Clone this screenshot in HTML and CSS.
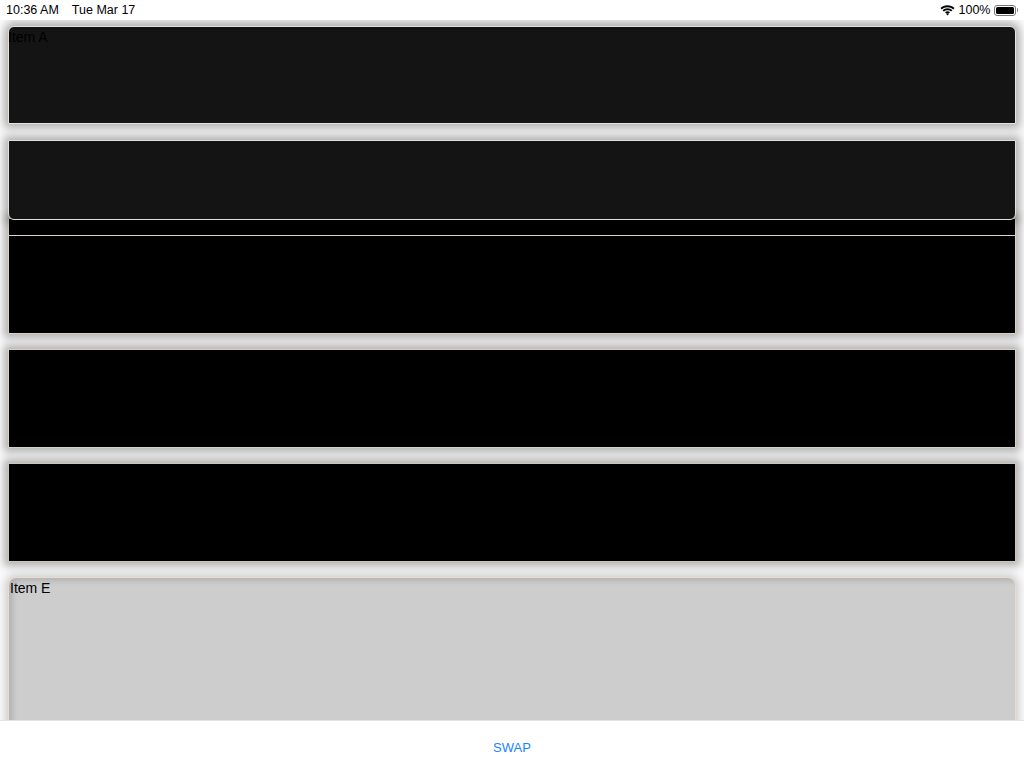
FILE: index.html
```html
<!DOCTYPE html>
<html>
<head>
<meta charset="utf-8">
<link rel="stylesheet" href="styles.css">
</head>
<body>
<div class="status">
  <div class="time">10:36 AM<span class="date">Tue Mar 17</span></div>
  <div class="right">
    <svg class="wifi" width="15" height="11" viewBox="0 0 15 11">
      <path d="M7.5 2.2c2.2 0 4.2.8 5.7 2.2l1.3-1.3C12.6 1.3 10.2.3 7.5.3S2.4 1.3.5 3.1l1.3 1.3C3.3 3 5.3 2.2 7.5 2.2z" fill="#000"/>
      <path d="M7.5 5.2c1.4 0 2.6.5 3.6 1.4l1.3-1.3C11.1 4 9.4 3.3 7.5 3.3S3.9 4 2.6 5.3l1.3 1.3c1-.9 2.2-1.4 3.6-1.4z" fill="#000"/>
      <path d="M7.5 8.2c.6 0 1.1.2 1.5.6L7.5 10.4 6 8.8c.4-.4.9-.6 1.5-.6z" fill="#000"/>
      <path d="M7.5 6.3c1 0 1.9.4 2.5 1L8.7 8.6c-.3-.3-.8-.5-1.2-.5s-.9.2-1.2.5L5 7.3c.6-.6 1.5-1 2.5-1z" fill="#000"/>
    </svg>
    <span class="pct">100%</span>
    <span class="battery"><span class="fill"></span></span><span class="nub"></span>
  </div>
</div>
<div class="main">
  <div class="card card-a"><span class="label">Item A</span></div>
  <div class="card card-b"></div>
  <div class="block-c"><div class="card card-c"></div></div>
  <div class="card card-d"></div>
  <div class="card card-x"></div>
  <div class="card card-e"><span class="label-e">Item E</span></div>
</div>
<div class="bottom"><span class="swap">SWAP</span></div>
</body>
</html>
```
FILE: styles.css
```css
html, body {
  margin: 0;
  padding: 0;
  background: #fff;
  font-family: "Liberation Sans", Arial, sans-serif;
  width: 1024px;
  height: 768px;
  overflow: hidden;
}
.status {
  height: 20px;
  display: flex;
  justify-content: space-between;
  align-items: center;
  padding: 0 6px;
  font-size: 12.5px;
  color: #000;
  background: #fff;
}
.date { margin-left: 13px; }
.right { display: flex; align-items: center; }
.wifi { margin-right: 4px; }
.pct { margin-right: 3px; }
.battery {
  border: 1px solid #777;
  border-radius: 3px;
  padding: 1px;
  box-sizing: border-box;
  display: flex;
  width: 22px;
  height: 11px;
}
.fill { flex: 1; background: #000; border-radius: 1.5px; }
.nub {
  width: 1.5px;
  height: 4px;
  background: #888;
  margin-left: 1px;
  border-radius: 0 1px 1px 0;
}
.main {
  height: 700px;
  overflow: hidden;
  padding: 6px 8px 0;
  box-sizing: border-box;
  background: #fafafa;
}
.card {
  box-sizing: border-box;
  border: 1px solid #d9cfc2;
  box-shadow: 0 0 8px 4px rgba(0,0,0,0.3);
  position: relative;
}
.card-a {
  height: 98px;
  background: #141414;
  border-radius: 6px 6px 0 0;
  border-color: #e8e2da;
}
.label {
  position: absolute;
  left: -1px;
  top: 2px;
  font-size: 14px;
  color: #000;
}
.card-b {
  margin-top: 16px;
  height: 80px;
  background: #141414;
  border-radius: 0 0 6px 6px;
  border-color: #e4dfd8;
  z-index: 2;
}
.block-c {
  margin-top: -1px;
  height: 115px;
  background: #000;
  box-shadow: 0 0 8px 4px rgba(0,0,0,0.3);
  padding-top: 16px;
  box-sizing: border-box;
  border-left: 1px solid #d9cfc2;
  border-right: 1px solid #d9cfc2;
  border-bottom: 1px solid #d9cfc2;
}
.card-c {
  height: 98px;
  background: #000;
  border: none;
  border-top: 1px solid #d9cfc2;
  box-shadow: none;
}
.card-d {
  margin-top: 15px;
  height: 99px;
  background: #000;
}
.card-x {
  margin-top: 15px;
  height: 99px;
  background: #000;
  border-color: #cfc6ba;
}
.card-e {
  margin-top: 15px;
  height: 200px;
  background: #cdcdcd;
  border-radius: 8px;
  border-color: #eadccb;
  box-shadow: 0 0 8px 3px rgba(0,0,0,0.18), inset 4px 3px 5px rgba(0,0,0,0.12);
}
.label-e {
  position: absolute;
  left: 1px;
  top: 2px;
  font-size: 14px;
  color: #000;
}
.bottom {
  height: 48px;
  display: flex;
  align-items: center;
  justify-content: center;
  background: #fff;
  border-top: 1px solid #e4e4e4;
  box-sizing: border-box;
  position: relative;
  z-index: 3;
}
.swap {
  color: #1a84ff;
  font-size: 13px;
  margin-top: 5px;
}
```
